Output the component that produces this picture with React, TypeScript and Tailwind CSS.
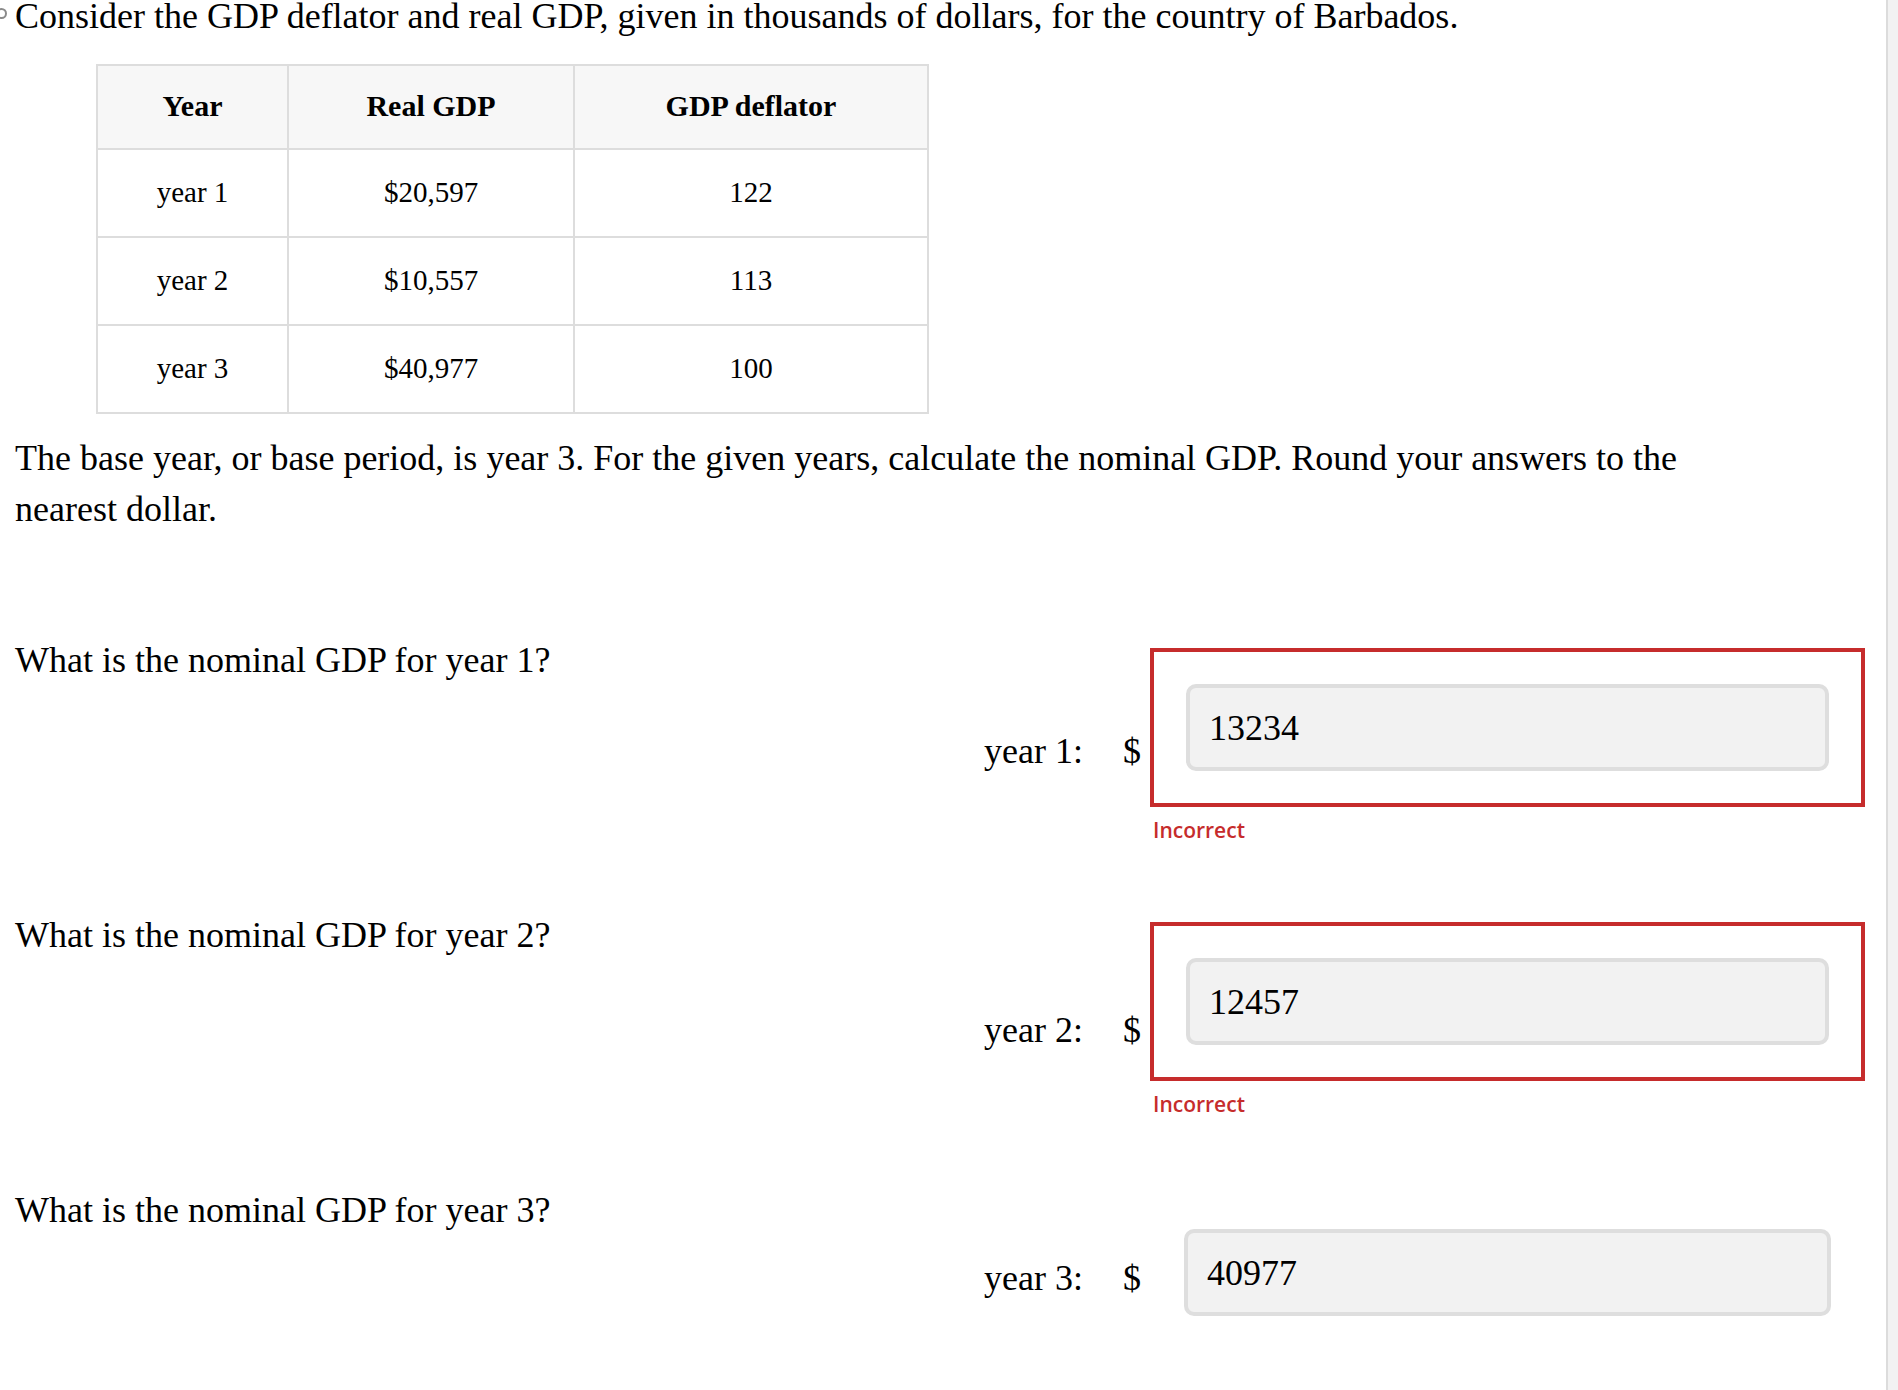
import React from "react";

interface Linha {
  ano: string;
  real: string;
  deflator: string;
}

const linhas: Linha[] = [
  { ano: "year 1", real: "$20,597", deflator: "122" },
  { ano: "year 2", real: "$10,557", deflator: "113" },
  { ano: "year 3", real: "$40,977", deflator: "100" },
];

interface Pergunta {
  n: number;
  valor: string;
  incorreto: boolean;
  rowMt: string;
  rightMt: string;
  labelMt: string;
}

const perguntas: Pergunta[] = [
  { n: 1, valor: "13234", incorreto: true, rowMt: "mt-[101px]", rightMt: "mt-[12px]", labelMt: "mt-[79px]" },
  { n: 2, valor: "12457", incorreto: true, rowMt: "mt-[67px]", rightMt: "mt-[11px]", labelMt: "mt-[84px]" },
  { n: 3, valor: "40977", incorreto: false, rowMt: "mt-[68px]", rightMt: "mt-[9px]", labelMt: "mt-[59px]" },
];

const BlocoPergunta: React.FC<{ p: Pergunta }> = ({ p }) => {
  return (
    <div className={`flex items-start ${p.rowMt}`}>
      <div className="w-[969px] shrink-0 text-[36px] leading-[48px]">
        What is the nominal GDP for year {p.n}?
      </div>
      <div className={`flex items-start ${p.rightMt}`}>
        <span className={`w-[139px] shrink-0 text-[36px] leading-[48px] ${p.labelMt}`}>
          year {p.n}:
        </span>
        <span className={`w-[27px] shrink-0 text-[36px] leading-[48px] ${p.labelMt}`}>$</span>
        <div>
          <div
            className={
              p.incorreto
                ? "w-[715px] border-4 border-[#c62c2c] p-[32px]"
                : "w-[715px] p-[34px]"
            }
          >
            <div className="flex h-[87px] items-center rounded-[10px] border-4 border-[#dedede] bg-[#f2f2f2] px-[19px] text-[36px] leading-none">
              {p.valor}
            </div>
          </div>
          {p.incorreto && (
            <div className="ml-[3px] mt-[9px] font-['Open_Sans',sans-serif] text-[21px] font-semibold leading-[28px] text-[#c62c2c]">
              Incorrect
            </div>
          )}
        </div>
      </div>
    </div>
  );
};

export default function App() {
  return (
    <div className="flex h-[1390px] w-full overflow-hidden bg-white font-['Liberation_Serif',serif] text-black">
      <div className="flex-1 pl-[15px]">
        <div className="flex items-center text-[36px] leading-[32px]">
          <span className="-ml-[19px] mr-[8px] mt-[-6px] inline-block h-[11px] w-[11px] shrink-0 rounded-full border-2 border-[#8a8a8a]" />
          Consider the GDP deflator and real GDP, given in thousands of dollars, for the country of Barbados.
        </div>

        <table className="ml-[81px] mt-[32px] w-[831px] table-fixed border-collapse">
          <colgroup>
            <col className="w-[191px]" />
            <col className="w-[286px]" />
            <col className="w-[354px]" />
          </colgroup>
          <thead>
            <tr className="h-[84px] bg-[#f7f7f7]">
              <th className="border-2 border-[#dddddd] pb-[4px] text-[30px] font-bold">Year</th>
              <th className="border-2 border-[#dddddd] pb-[4px] text-[30px] font-bold">Real GDP</th>
              <th className="border-2 border-[#dddddd] pb-[4px] text-[30px] font-bold">GDP deflator</th>
            </tr>
          </thead>
          <tbody>
            {linhas.map((l) => (
              <tr key={l.ano} className="h-[88px]">
                <td className="border-2 border-[#dddddd] text-center text-[29px]">{l.ano}</td>
                <td className="border-2 border-[#dddddd] text-center text-[29px]">{l.real}</td>
                <td className="border-2 border-[#dddddd] text-center text-[29px]">{l.deflator}</td>
              </tr>
            ))}
          </tbody>
        </table>

        <p className="mt-[19px] text-[36px] leading-[51px]">
          The base year, or base period, is year 3. For the given years, calculate the nominal GDP. Round your answers to the
          <br />
          nearest dollar.
        </p>

        {perguntas.map((p) => (
          <BlocoPergunta key={p.n} p={p} />
        ))}
      </div>
      <div className="w-[12px] shrink-0 border-l-2 border-[#dcdcdc] bg-[#f2f2f2]" />
    </div>
  );
}
